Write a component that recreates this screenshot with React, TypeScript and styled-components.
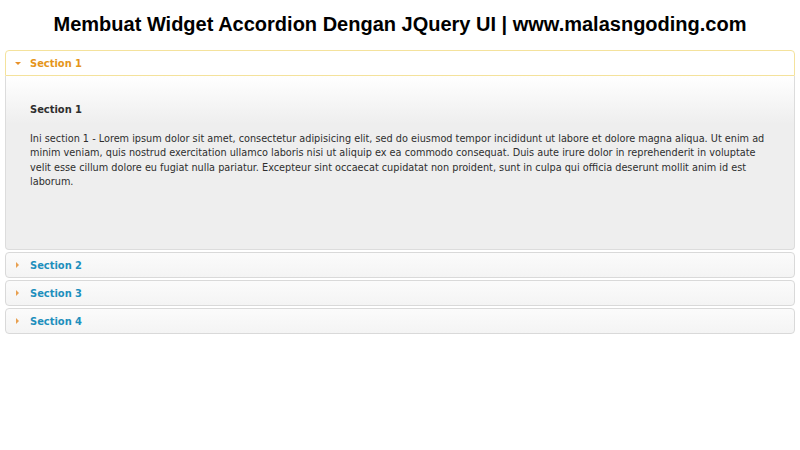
import React, { useState } from "react";
import styled, { createGlobalStyle, css } from "styled-components";

const GlobalStyle = createGlobalStyle`
  html, body {
    margin: 0;
    padding: 0;
    background: #ffffff;
  }
  body {
    font-family: "Liberation Sans", Arial, sans-serif;
  }
`;

const Page = styled.div`
  width: 800px;
  display: flex;
  flex-direction: column;
`;

const Title = styled.h1`
  margin: 0;
  height: 50px;
  display: flex;
  align-items: center;
  justify-content: center;
  font-family: "Liberation Sans", Arial, sans-serif;
  font-size: 20px;
  font-weight: bold;
  color: #000000;
  padding-bottom: 2px;
  box-sizing: border-box;
`;

const Accordion = styled.div`
  margin: 0 5px;
  display: flex;
  flex-direction: column;
  font-family: "DejaVu Sans Condensed", "DejaVu Sans", Tahoma, sans-serif;
`;

const Header = styled.h3<{ $active: boolean }>`
  margin: 2px 0 0;
  height: 26px;
  box-sizing: border-box;
  display: flex;
  align-items: center;
  gap: 9px;
  padding: 0 0 0 9px;
  font-size: 11px;
  font-weight: bold;
  cursor: pointer;
  border-radius: 4px;
  ${(p) =>
    p.$active
      ? css`
          border: 1px solid #f4e29c;
          background: #ffffff;
          color: #e5951a;
          border-bottom-left-radius: 0;
          border-bottom-right-radius: 0;
        `
      : css`
          border: 1px solid #d9d9d9;
          background: linear-gradient(#fbfbfb, #f4f4f4);
          color: #1d8fbd;
        `}
  &:first-child {
    margin-top: 0;
  }
`;

const Caret = styled.span<{ $open: boolean }>`
  width: 0;
  height: 0;
  margin-left: ${(p) => (p.$open ? "0" : "1px")};
  margin-right: ${(p) => (p.$open ? "0" : "2px")};
  ${(p) =>
    p.$open
      ? css`
          border-left: 3px solid transparent;
          border-right: 3px solid transparent;
          border-top: 3px solid #e8912a;
        `
      : css`
          border-top: 3px solid transparent;
          border-bottom: 3px solid transparent;
          border-left: 3px solid #e8a050;
        `}
`;

const Panel = styled.div`
  height: 174px;
  box-sizing: border-box;
  border: 1px solid #dcdcdc;
  border-top: 0;
  border-radius: 0 0 4px 4px;
  background: linear-gradient(#ffffff 0, #eeeeee 48px, #eeeeee 100%);
  padding: 27px 24px 0 24px;
  color: #2e2e2e;
`;

const PanelHeading = styled.h4`
  margin: 0 0 15px;
  font-size: 11px;
  font-weight: bold;
  line-height: 14px;
  color: #2e2e2e;
`;

const PanelText = styled.p`
  margin: 0;
  font-size: 10.8px;
  line-height: 14.4px;
`;

const lorem =
  "Lorem ipsum dolor sit amet, consectetur adipisicing elit, sed do eiusmod tempor incididunt ut labore et dolore magna aliqua. Ut enim ad minim veniam, quis nostrud exercitation ullamco laboris nisi ut aliquip ex ea commodo consequat. Duis aute irure dolor in reprehenderit in voluptate velit esse cillum dolore eu fugiat nulla pariatur. Excepteur sint occaecat cupidatat non proident, sunt in culpa qui officia deserunt mollit anim id est laborum.";

const sections = [1, 2, 3, 4].map((n) => ({
  title: `Section ${n}`,
  body: `Ini section ${n} - ${lorem}`,
}));

export default function App() {
  const [open, setOpen] = useState(0);

  return (
    <>
      <GlobalStyle />
      <Page>
        <Title>Membuat Widget Accordion Dengan JQuery UI | www.malasngoding.com</Title>
        <Accordion>
          {sections.map((s, i) => (
            <React.Fragment key={s.title}>
              <Header $active={open === i} onClick={() => setOpen(i)}>
                <Caret $open={open === i} />
                {s.title}
              </Header>
              {open === i && (
                <Panel>
                  <PanelHeading>{s.title}</PanelHeading>
                  <PanelText>{s.body}</PanelText>
                </Panel>
              )}
            </React.Fragment>
          ))}
        </Accordion>
      </Page>
    </>
  );
}
